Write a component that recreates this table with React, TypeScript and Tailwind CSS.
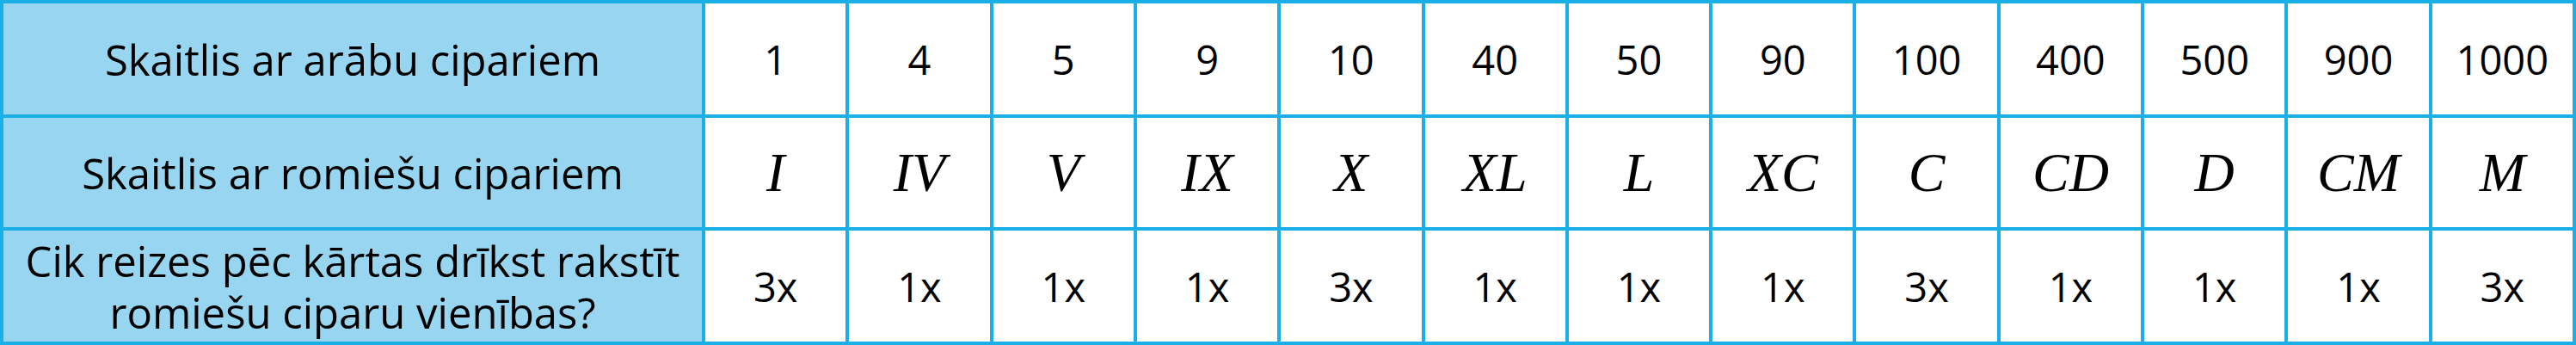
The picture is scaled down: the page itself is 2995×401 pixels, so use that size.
const arabic = ['1', '4', '5', '9', '10', '40', '50', '90', '100', '400', '500', '900', '1000'];
const roman = ['I', 'IV', 'V', 'IX', 'X', 'XL', 'L', 'XC', 'C', 'CD', 'D', 'CM', 'M'];
const times = ['3x', '1x', '1x', '1x', '3x', '1x', '1x', '1x', '3x', '1x', '1x', '1x', '3x'];

const headCell = 'bg-[#98d5f0] flex items-center justify-center text-center text-[49px]';
const cell = 'bg-white flex items-center justify-center text-center';

export default function App() {
  return (
    <div
      className="w-[2995px] h-[401px] bg-[#1aafe6] p-[4px] grid grid-cols-[812px_repeat(13,1fr)] grid-rows-[129px_127px_129px] gap-[4px] text-black text-[47px] leading-[60px]"
      style={{ fontFamily: '"Open Sans", "Noto Sans", sans-serif' }}
    >
      {/* row 1 */}
      <div className={headCell}>Skaitlis ar arābu cipariem</div>
      {arabic.map((n, i) => (
        <div key={'a' + i} className={cell}>{n}</div>
      ))}

      {/* row 2 */}
      <div className={headCell}>Skaitlis ar romiešu cipariem</div>
      {roman.map((r, i) => (
        <div
          key={'r' + i}
          className={cell + ' italic text-[64px]'}
          style={{ fontFamily: '"Liberation Serif", "Times New Roman", serif' }}
        >
          {r}
        </div>
      ))}

      {/* row 3 */}
      <div className={headCell}>
        Cik reizes pēc kārtas drīkst rakstīt
        <br />
        romiešu ciparu vienības?
      </div>
      {times.map((t, i) => (
        <div key={'t' + i} className={cell}>{t}</div>
      ))}
    </div>
  );
}
